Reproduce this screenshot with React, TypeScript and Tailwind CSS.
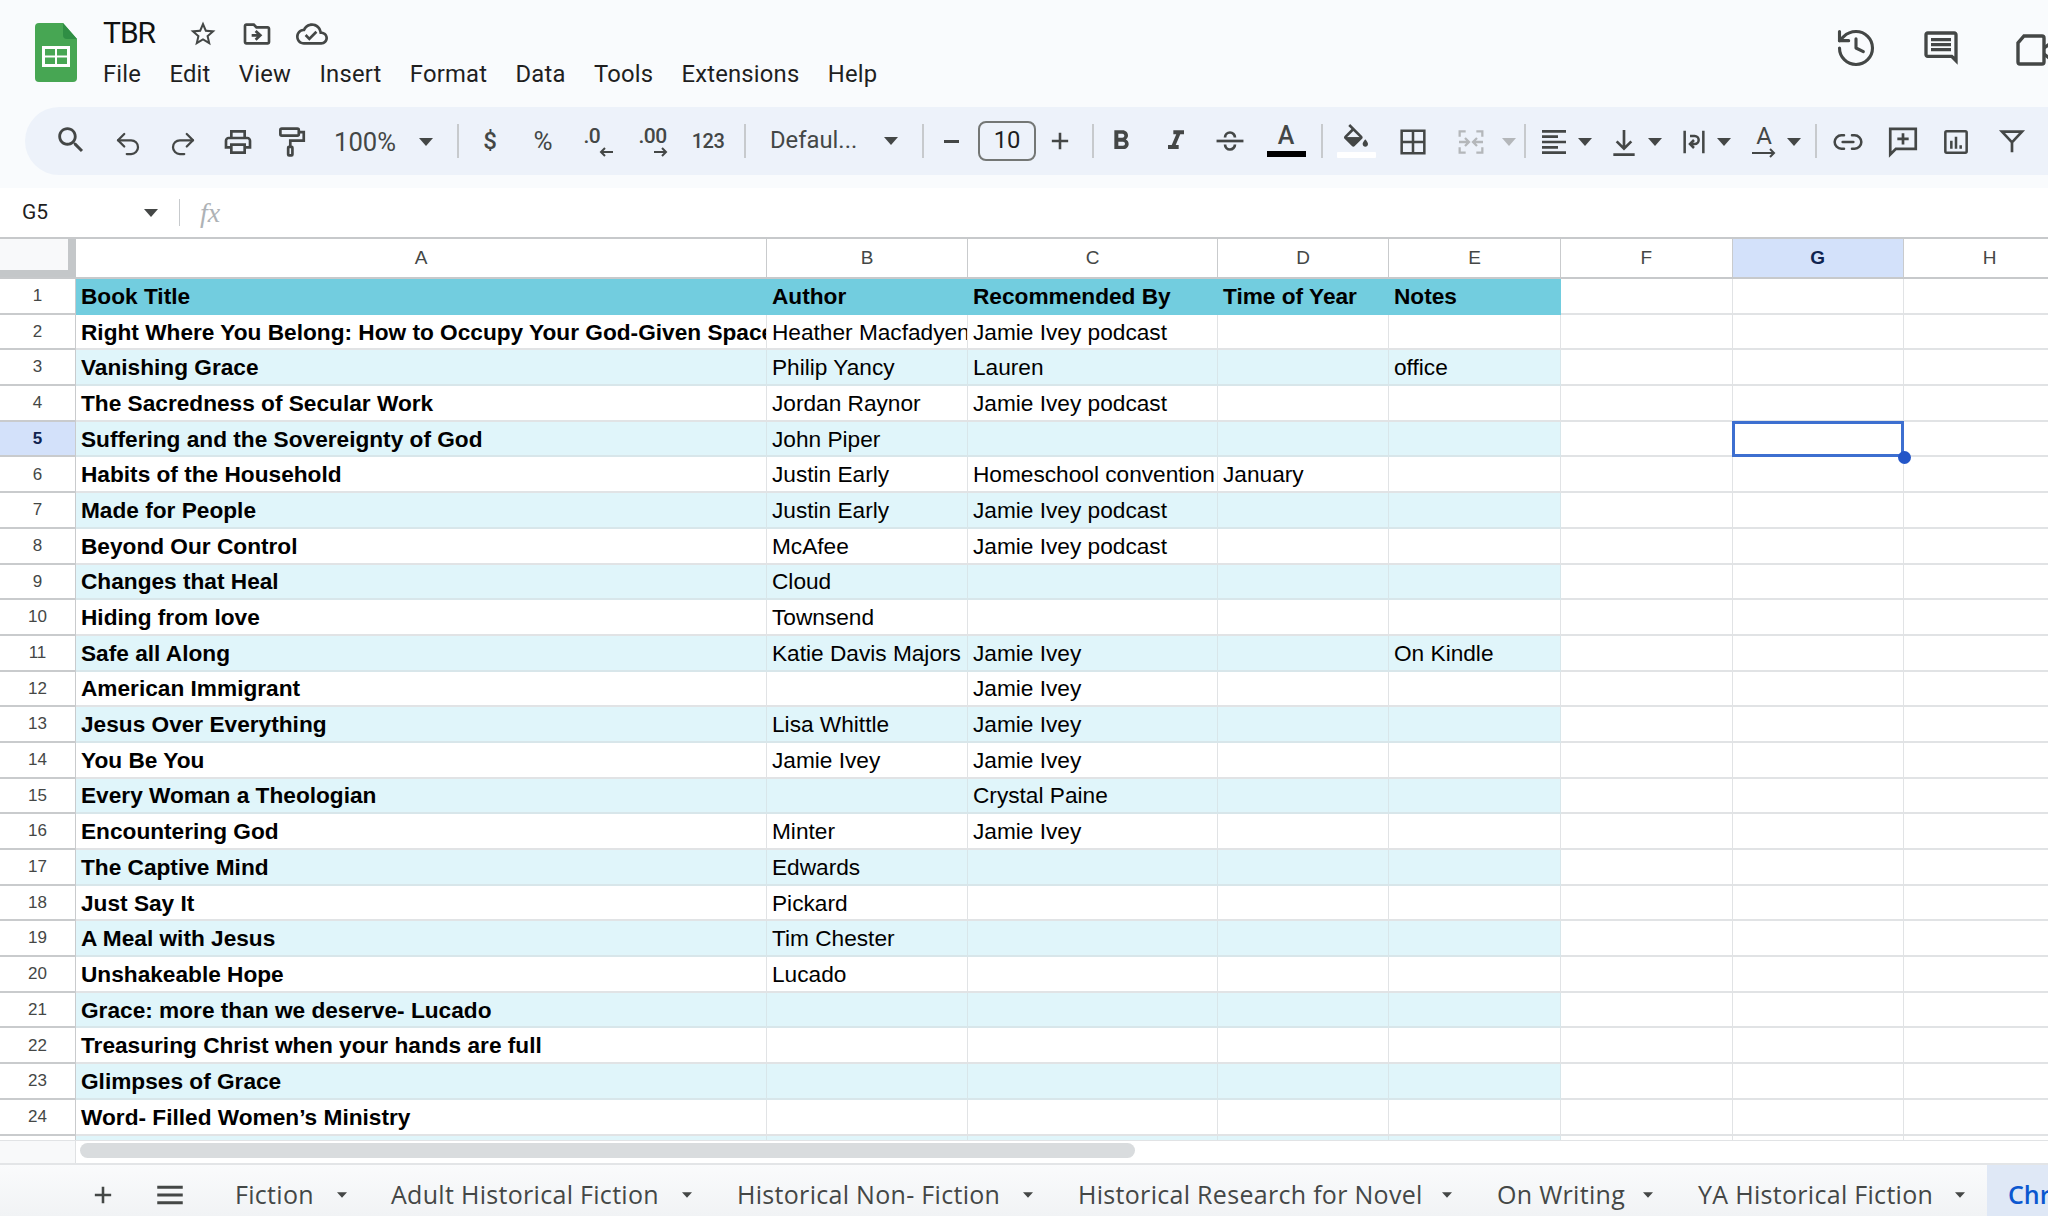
import React from "react";
import { History, Link2, Undo2, Redo2 } from "lucide-react";

const INK = "text-[#444746]";

function Ico({ d, fill, sw = 1.7, size = "w-[32px] h-[32px]", children }: { d?: string; fill?: boolean; sw?: number; size?: string; children?: React.ReactNode }) {
  return (
    <svg viewBox="0 0 24 24" className={size + " shrink-0"} fill={fill ? "currentColor" : "none"} stroke={fill ? "none" : "currentColor"} strokeWidth={sw}>
      {d ? <path d={d} /> : null}
      {children}
    </svg>
  );
}

function Caret({ small, grey }: { small?: boolean; grey?: boolean }) {
  return (
    <svg viewBox="0 0 14 8" className={(small ? "w-[10px] h-[6px] " : "w-[14px] h-[8px] ") + "shrink-0 " + (grey ? "text-[#b4b7ba]" : "")} fill="currentColor">
      <path d="M0 0h14L7 8z" />
    </svg>
  );
}

function Sep() {
  return <div className="w-[2px] h-[34px] shrink-0 bg-[#c7cacd]" />;
}

function Btn({ className, children }: { className: string; children: React.ReactNode }) {
  return <div className={"h-full shrink-0 flex items-center justify-center " + className}>{children}</div>;
}

const R = "font-['Roboto',sans-serif]";

function Logo() {
  return (
    <svg viewBox="0 0 42 59" className="w-[42px] h-[59px] shrink-0">
      <path d="M4 0H28L42 16V55a4 4 0 0 1-4 4H4a4 4 0 0 1-4-4V4a4 4 0 0 1 4-4z" fill="#47a653" />
      <path d="M28 0L42 16H32a4 4 0 0 1-4-4z" fill="#2f8e44" />
      <rect x="7" y="23" width="28" height="21" fill="#fff" />
      <rect x="10" y="26" width="10" height="6.5" fill="#47a653" />
      <rect x="22" y="26" width="10" height="6.5" fill="#47a653" />
      <rect x="10" y="34.5" width="10" height="6.5" fill="#47a653" />
      <rect x="22" y="34.5" width="10" height="6.5" fill="#47a653" />
    </svg>
  );
}

function Header() {
  const menus = ["File", "Edit", "View", "Insert", "Format", "Data", "Tools", "Extensions", "Help"];
  return (
    <div className="h-[107px] shrink-0 bg-[#f9fbfd] flex overflow-hidden">
      <div className="ml-[35px] mt-[23px]">
        <Logo />
      </div>
      <div className="ml-[26px] flex flex-col">
        <div className="flex items-center h-[36px] mt-[15px]">
          <span className={R + " text-[30px] leading-none text-[#111] tracking-[-1px]"}>TBR</span>
          <div className={"ml-[33px] mt-[1px] flex items-center " + INK}>
            <Ico fill size="w-[30px] h-[30px]" d="M22 9.24l-7.19-.62L12 2 9.19 8.63 2 9.24l5.46 4.73L5.82 21 12 17.27 18.18 21l-1.63-7.03L22 9.24zM12 15.4l-3.76 2.27 1-4.28-3.32-2.88 4.38-.38L12 6.1l1.71 4.04 4.38.38-3.32 2.88 1 4.28L12 15.4z" />
            <div className="ml-[23px]">
              <Ico fill d="M20 6h-8l-2-2H4c-1.1 0-2 .9-2 2v12c0 1.1.9 2 2 2h16c1.1 0 2-.9 2-2V8c0-1.1-.9-2-2-2zm0 12H4V6h5.17l2 2H20v10zm-8.16-6H8v2h3.84l-1.59 1.59L11.66 17 16 12.99 11.66 9l-1.41 1.41L11.84 12z" />
            </div>
            <div className="ml-[23px]">
              <Ico fill d="M19.35 10.04C18.67 6.59 15.64 4 12 4 9.11 4 6.6 5.64 5.35 8.04 2.34 8.36 0 10.91 0 14c0 3.31 2.69 6 6 6h13c2.76 0 5-2.24 5-5 0-2.64-2.05-4.78-4.65-4.96zM19 18H6c-2.21 0-4-1.79-4-4 0-2.05 1.53-3.76 3.56-3.97l1.07-.11.5-.95C8.08 7.14 9.94 6 12 6c2.62 0 4.88 1.86 5.39 4.43l.3 1.5 1.53.11c1.56.1 2.78 1.41 2.78 2.96 0 1.65-1.35 3-3 3zm-9-3.82l-2.09-2.09L6.5 13.5 10 17l6.01-6.01-1.41-1.41z" />
            </div>
          </div>
        </div>
        <div className={R + " flex items-center gap-[28.3px] mt-[8px] text-[23.8px] tracking-[0.2px] leading-[30px] text-[#1f1f1f]"}>
          {menus.map((m) => (
            <span key={m}>{m}</span>
          ))}
        </div>
      </div>
      <div className={"ml-auto mr-[-12px] mt-[26px] flex items-start shrink-0 " + INK}>
        <History className="w-[44px] h-[44px] shrink-0" strokeWidth={1.7} />
        <div className="ml-[43px] mt-[2px]">
          <Ico fill size="w-[40px] h-[40px]" d="M20 2H4c-1.1 0-2 .9-2 2v12c0 1.1.9 2 2 2h14l4 4V4c0-1.1-.9-2-2-2zm0 15.17L18.83 16H4V4h16v13.17zM6 12h12v2H6zm0-3h12v2H6zm0-3h12v2H6z" />
        </div>
        <div className="ml-[51px] mt-[5px]">
          <svg viewBox="0 0 48 40" className="w-[48px] h-[40px] shrink-0" fill="none" stroke="currentColor" strokeWidth="3.4">
            <path d="M12 5h18a2 2 0 0 1 2 2v24a2 2 0 0 1-2 2H8a2 2 0 0 1-2-2V12z" />
            <path d="M32 17l12-9v24l-12-9" />
          </svg>
        </div>
      </div>
    </div>
  );
}

function Toolbar() {
  return (
    <div className="h-[81px] shrink-0 bg-[#f9fbfd] pl-[25px]">
      <div className={"h-[68px] bg-[#edf2fa] rounded-l-[34px] pl-[19px] flex items-center " + INK}>
        <Btn className="w-[54px]">
          <Ico fill d="M15.5 14h-.79l-.28-.27C15.41 12.59 16 11.11 16 9.5 16 5.91 13.09 3 9.5 3S3 5.91 3 9.5 5.91 16 9.5 16c1.61 0 3.09-.59 4.23-1.57l.27.28v.79l5 4.99L20.49 19l-4.99-5zm-6 0C7.01 14 5 11.99 5 9.5S7.01 5 9.5 5 14 7.01 14 9.5 11.99 14 9.5 14z" size="w-[34px] h-[34px] mt-[-2px]" />
        </Btn>
        <Btn className="w-[60px] pt-[6px]">
          <Undo2 className="w-[30px] h-[30px]" strokeWidth={1.8} />
        </Btn>
        <Btn className="w-[50px] pt-[6px]">
          <Redo2 className="w-[30px] h-[30px]" strokeWidth={1.8} />
        </Btn>
        <Btn className="w-[60px] pt-[2px]">
          <Ico fill d="M19 8h-1V3H6v5H5c-1.66 0-3 1.34-3 3v6h4v4h12v-4h4v-6c0-1.66-1.34-3-3-3zM8 5h8v3H8V5zm8 12v2H8v-4h8v2zm2-2v-2H6v2H4v-4c0-.55.45-1 1-1h14c.55 0 1 .45 1 1v4h-2z" />
        </Btn>
        <Btn className="w-[46px] pt-[2px]">
          <Ico sw={1.9} size="w-[34px] h-[34px]">
            <rect x="4.5" y="2.5" width="13" height="5" rx="1" />
            <path d="M17.5 5H21v6H11.5v4" />
            <rect x="10" y="15.5" width="3" height="6" rx="0.6" />
          </Ico>
        </Btn>
        <div className={"w-[143px] h-full shrink-0 flex items-center justify-between pl-[20px] pr-[24px] " + R + " text-[25.6px] pt-[2px]"}>
          <span>100%</span>
          <Caret />
        </div>
        <Sep />
        <Btn className={"w-[62px] text-[24px] font-medium " + R}>$</Btn>
        <Btn className={"w-[44px] text-[26px] " + R}>%</Btn>
        <Btn className="w-[66px]">
          <div className="flex flex-col items-start mt-[1px]">
            <span className={R + " text-[21px] font-medium leading-[20px] tracking-[-0.5px]"}>.0</span>
            <svg viewBox="0 0 14 10" className="w-[14px] h-[10px] ml-[15px] mt-[1px]" fill="none" stroke="currentColor" strokeWidth="2">
              <path d="M14 5H2M6 1L2 5l4 4" />
            </svg>
          </div>
        </Btn>
        <Btn className="w-[44px]">
          <div className="flex flex-col items-start mt-[1px]">
            <span className={R + " text-[21px] font-medium leading-[20px] tracking-[-0.5px]"}>.00</span>
            <svg viewBox="0 0 14 10" className="w-[14px] h-[10px] ml-[15px] mt-[1px]" fill="none" stroke="currentColor" strokeWidth="2">
              <path d="M0 5h12M8 1l4 4-4 4" />
            </svg>
          </div>
        </Btn>
        <Btn className={"w-[66px] text-[20px] tracking-[-0.6px] font-medium " + R}>123</Btn>
        <div className="ml-[3px]">
          <Sep />
        </div>
        <div className={"w-[176px] h-full shrink-0 flex items-center justify-between pl-[24px] pr-[24px] text-[23.8px] " + R}>
          <span>Defaul...</span>
          <Caret />
        </div>
        <Sep />
        <Btn className="w-[54px]">
          <div className="w-[15px] h-[3px] bg-current" />
        </Btn>
        <div className={"w-[58px] h-[40px] shrink-0 flex items-center justify-center rounded-[8px] border-2 border-[#747775] text-[23.8px] text-[#1f1f1f] " + R}>10</div>
        <Btn className="w-[48px]">
          <Ico sw={2.2} size="w-[28px] h-[28px]" d="M12 5v14M5 12h14" />
        </Btn>
        <div className="ml-[8px]">
          <Sep />
        </div>
        <Btn className="w-[54px]">
          <Ico fill d="M15.6 10.79c.97-.67 1.65-1.77 1.65-2.79 0-2.26-1.75-4-4-4H7v14h7.04c2.09 0 3.71-1.7 3.71-3.79 0-1.52-.86-2.82-2.15-3.42zM10 6.5h3c.83 0 1.5.67 1.5 1.5s-.67 1.5-1.5 1.5h-3v-3zm3.5 9H10v-3h3.5c.83 0 1.5.67 1.5 1.5s-.67 1.5-1.5 1.5z" />
        </Btn>
        <Btn className="w-[56px]">
          <Ico fill d="M10 4v3h2.21l-3.42 8H6v3h8v-3h-2.21l3.42-8H18V4z" />
        </Btn>
        <Btn className="w-[52px]">
          <Ico sw={1.9} size="w-[34px] h-[34px]">
            <path d="M2.5 12h19" />
            <path d="M8.5 9.5a3.5 3.5 0 0 1 7 0" />
            <path d="M8.5 14.5a3.5 3.5 0 0 0 7 0" />
          </Ico>
        </Btn>
        <Btn className="w-[60px]">
          <div className="flex flex-col items-center">
            <span className={R + " text-[25px] font-medium leading-[22px] mt-[-1px]"}>A</span>
            <div className="w-[39px] h-[6px] mt-[4px] bg-black" />
          </div>
        </Btn>
        <div className="ml-[5px]">
          <Sep />
        </div>
        <Btn className="w-[66px]">
          <div className="flex flex-col items-center">
            <svg viewBox="0 0 24 21" className="w-[32px] h-[28px] shrink-0" fill="currentColor">
              <path d="M16.56 8.94L7.62 0 6.21 1.41l2.38 2.38-5.15 5.15c-.59.59-.59 1.54 0 2.12l5.5 5.5c.29.29.68.44 1.06.44s.77-.15 1.06-.44l5.5-5.5c.59-.58.59-1.53 0-2.12zM5.21 10L10 5.21 14.79 10H5.21zM19 11.5s-2 2.17-2 3.5c0 1.1.9 2 2 2s2-.9 2-2c0-1.33-2-3.5-2-3.5z" />
              <path d="M5 10h10l-5 5z" />
            </svg>
            <div className="w-[39px] h-[6px] bg-white rounded-[1px]" />
          </div>
        </Btn>
        <Btn className="w-[48px] pt-[2px]">
          <Ico sw={1.9} d="M3.5 3.5h17v17h-17zM12 3.5v17M3.5 12h17" />
        </Btn>
        <div className="w-[87px] h-full shrink-0 flex items-center pl-[18px] pt-[2px] text-[#b4b7ba]">
          <Ico sw={1.7}>
            <path d="M3.5 8V4H8M3.5 16v4H8M20.5 8V4H16M20.5 16v4H16" />
            <path d="M3 12h7M7.5 9l3 3-3 3M21 12h-7M16.5 9l-3 3 3 3" />
          </Ico>
          <div className="ml-[15px]">
            <Caret grey />
          </div>
        </div>
        <Sep />
        <div className="w-[75px] h-full shrink-0 flex items-center pl-[12px] pt-[2px]">
          <Ico fill d="M15 15H3v2h12v-2zm0-8H3v2h12V7zM3 13h18v-2H3v2zm0 8h18v-2H3v2zM3 3v2h18V3H3z" />
          <div className="ml-[8px]">
            <Caret />
          </div>
        </div>
        <div className="w-[75px] h-full shrink-0 flex items-center pl-[7px] pt-[2px]">
          <Ico sw={2} d="M12 3v14M6.5 11.5L12 17l5.5-5.5M4 21.5h16" />
          <div className="ml-[8px]">
            <Caret />
          </div>
        </div>
        <div className="w-[72px] h-full shrink-0 flex items-center pl-[2px] pt-[2px]">
          <Ico sw={1.9}>
            <path d="M5 3.5v17M19 3.5v17" />
            <path d="M9 7.5h3.5a3 3 0 0 1 0 6H9M12 10.5l-3 3 3 3" />
          </Ico>
          <div className="ml-[7px]">
            <Caret />
          </div>
        </div>
        <div className="w-[66px] h-full shrink-0 flex items-center pt-[2px]">
          <div className="w-[32px] flex flex-col items-center">
            <span className={R + " text-[24px] leading-[21px]"}>A</span>
            <svg viewBox="0 0 24 10" className="w-[24px] h-[10px] mt-[1px]" fill="none" stroke="currentColor" strokeWidth="2">
              <path d="M0 5h22M18 1l4 4-4 4" />
            </svg>
          </div>
          <div className="ml-[7px]">
            <Caret />
          </div>
        </div>
        <div className="ml-[1px]">
          <Sep />
        </div>
        <Btn className="w-[62px] pt-[2px]">
          <Link2 className="w-[32px] h-[32px]" strokeWidth={1.9} />
        </Btn>
        <Btn className="w-[48px]">
          <Ico sw={1.9} d="M3 3.5h18v14H7L3 21.5zM12 6.5v8M8 10.5h8" size="w-[34px] h-[34px]" />
        </Btn>
        <Btn className="w-[58px] pt-[2px]">
          <Ico sw={1.9} d="M5 4h14a1 1 0 0 1 1 1v14a1 1 0 0 1-1 1H5a1 1 0 0 1-1-1V5a1 1 0 0 1 1-1zM8.5 11v6M12 8v9M15.5 14.5V17" />
        </Btn>
        <Btn className="w-[54px]">
          <Ico sw={2} d="M4.5 5h15L12 13zM12 13v7.5" />
        </Btn>
      </div>
    </div>
  );
}

function FormulaBar() {
  return (
    <div className="h-[49px] shrink-0 bg-white flex items-center relative">
      <div className={"w-[179px] shrink-0 flex items-center pl-[22px] pr-[21px] justify-between text-[21px] text-[#1f1f1f] " + R}>
        <span>G5</span>
        <span className={INK}>
          <Caret />
        </span>
      </div>
      <div className="w-[1px] h-[27px] bg-[#c7cacd]" />
      <span className="ml-[20px] font-['Liberation_Serif',serif] italic text-[28px] text-[#aeb2b6] leading-none">fx</span>
    </div>
  );
}

type Row = [string, string, string, string, string];
const rows: Row[] = [
  ["Book Title", "Author", "Recommended By", "Time of Year", "Notes"],
  ["Right Where You Belong: How to Occupy Your God-Given Space", "Heather Macfadyen", "Jamie Ivey podcast", "", ""],
  ["Vanishing Grace", "Philip Yancy", "Lauren", "", "office"],
  ["The Sacredness of Secular Work", "Jordan Raynor", "Jamie Ivey podcast", "", ""],
  ["Suffering and the Sovereignty of God", "John Piper", "", "", ""],
  ["Habits of the Household", "Justin Early", "Homeschool convention", "January", ""],
  ["Made for People", "Justin Early", "Jamie Ivey podcast", "", ""],
  ["Beyond Our Control", "McAfee", "Jamie Ivey podcast", "", ""],
  ["Changes that Heal", "Cloud", "", "", ""],
  ["Hiding from love", "Townsend", "", "", ""],
  ["Safe all Along", "Katie Davis Majors", "Jamie Ivey", "", "On Kindle"],
  ["American Immigrant", "", "Jamie Ivey", "", ""],
  ["Jesus Over Everything", "Lisa Whittle", "Jamie Ivey", "", ""],
  ["You Be You", "Jamie Ivey", "Jamie Ivey", "", ""],
  ["Every Woman a Theologian", "", "Crystal Paine", "", ""],
  ["Encountering God", "Minter", "Jamie Ivey", "", ""],
  ["The Captive Mind", "Edwards", "", "", ""],
  ["Just Say It", "Pickard", "", "", ""],
  ["A Meal with Jesus", "Tim Chester", "", "", ""],
  ["Unshakeable Hope", "Lucado", "", "", ""],
  ["Grace: more than we deserve- Lucado", "", "", "", ""],
  ["Treasuring Christ when your hands are full", "", "", "", ""],
  ["Glimpses of Grace", "", "", "", ""],
  ["Word- Filled Women\u2019s Ministry", "", "", "", ""],
];

const colW = ["w-[691px]", "w-[201px]", "w-[250px]", "w-[171px]", "w-[172px]", "w-[171.5px]", "w-[171.5px]", "w-[172px]"];
const letters = ["A", "B", "C", "D", "E", "F", "G", "H"];

function ColHeader() {
  return (
    <div className="h-[42px] shrink-0 flex border-t-2 border-b-2 border-[#c7c9cb] font-['Liberation_Sans',sans-serif] text-[19px] text-[#444746]">
      <div className="w-[76px] shrink-0 bg-[#f8f9fa] border-r-[8px] border-b-[7px] border-[#c4c7c9]" />
      {letters.map((l, i) => (
        <div key={l} className={colW[i] + " shrink-0 flex items-center justify-center border-r border-[#c9cbcd] " + (l === "G" ? "bg-[#d3e1fa] font-bold text-[#0f2350]" : "bg-white")}>
          {l}
        </div>
      ))}
    </div>
  );
}

function DataRow({ row, index }: { row: Row; index: number }) {
  const head = index === 0;
  const alt = index % 2 === 0 && !head;
  const selected = index === 4;
  const bg = head ? "bg-[#72cddf]" : alt ? "bg-[#e0f5fa]" : "bg-white";
  return (
    <div className="h-[35.7px] shrink-0 flex font-['Liberation_Sans',sans-serif] text-[22.67px] text-black">
      <div className={"w-[76px] shrink-0 flex items-center justify-center border-r border-b-2 border-[#c9cbcd] text-[17px] " + (selected ? "bg-[#d3e1fa] font-bold text-[#0f2350]" : "bg-white text-[#444746]")}>
        {index + 1}
      </div>
      {row.map((cell, c) => (
        <div key={c} className={colW[c] + " shrink-0 flex items-center pl-[5px] overflow-hidden whitespace-nowrap border-r border-b-2 " + bg + " " + (head ? "border-[#72cddf] font-bold" : alt ? "border-[#d8e6ea]" : "border-[#e1e3e5]") + " " + (c === 0 ? "font-bold" : "")}>
          {cell}
        </div>
      ))}
      {[5, 6, 7].map((c) => (
        <div key={c} className={colW[c] + " shrink-0 relative bg-white border-r border-b-2 border-[#e1e3e5]"}>
          {selected && c === 6 ? (
            <>
              <div className="absolute left-[-1px] right-[-1px] top-[-1px] bottom-[-2px] border-[3px] border-[#3d6fd0]" />
              <div className="absolute right-[-8px] bottom-[-9px] w-[13px] h-[13px] rounded-full bg-[#2456c8] z-10" />
            </>
          ) : null}
        </div>
      ))}
    </div>
  );
}

function Grid() {
  return (
    <div className="flex-1 flex flex-col overflow-hidden bg-white">
      <ColHeader />
      {rows.map((r, i) => (
        <DataRow key={i} row={r} index={i} />
      ))}
      <div className="h-[4px] shrink-0 flex overflow-hidden">
        <div className="w-[76px] shrink-0 bg-white border-r border-[#c9cbcd]" />
        {colW.map((w, c) => (
          <div key={c} className={w + " shrink-0 border-r " + (c < 5 ? "bg-[#e0f5fa] border-[#d8e6ea]" : "bg-white border-[#e1e3e5]")} />
        ))}
      </div>
      <div className="h-[23px] shrink-0 flex border-t border-[#e1e3e5]">
        <div className="w-[76px] shrink-0 bg-[#f8f9fa] border-r border-[#dfe1e3]" />
        <div className="ml-[4px] mt-[2px] w-[1055px] h-[15px] rounded-full bg-[#d9dcde]" />
      </div>
    </div>
  );
}

function Tab({ label, className }: { label: string; className: string }) {
  return (
    <div className={"shrink-0 flex items-center text-[25px] tracking-[0.3px] text-[#444746] justify-between pt-[9px] font-['Open_Sans',sans-serif] " + className}>
      <span>{label}</span>
      <Caret small />
    </div>
  );
}

function TabBar() {
  return (
    <div className="h-[53px] shrink-0 flex items-center border-t-2 border-[#e3e5e7] bg-gradient-to-b from-[#fafbfc] to-[#f1f3f5] overflow-hidden">
      <div className={"w-[235px] shrink-0 flex items-center pl-[89px] pt-[9px] " + INK}>
        <Ico sw={2.2} size="w-[28px] h-[28px]" d="M12 5v14M5 12h14" />
        <div className="ml-[36px]">
          <Ico sw={2.2} size="w-[34px] h-[34px]" d="M3 6.5h18M3 12h18M3 17.5h18" />
        </div>
      </div>
      <Tab label="Fiction" className="w-[112px] mr-[44px]" />
      <Tab label="Adult Historical Fiction" className="w-[301px] mr-[45px]" />
      <Tab label="Historical Non- Fiction" className="w-[296px] mr-[45px]" />
      <Tab label="Historical Research for Novel" className="w-[374px] mr-[45px]" />
      <Tab label="On Writing" className="w-[156px] mr-[45px]" />
      <Tab label="YA Historical Fiction" className="w-[267px] mr-[22px]" />
      <div className="w-[62px] h-full shrink-0 bg-[#dfe8f6] pl-[21px] pt-[9px] flex items-center overflow-hidden whitespace-nowrap font-['Open_Sans',sans-serif] font-semibold text-[25px] text-[#0b57d0]">Chr</div>
    </div>
  );
}

export default function App() {
  return (
    <div className="w-[2048px] h-[1216px] overflow-hidden flex flex-col bg-white">
      <Header />
      <Toolbar />
      <FormulaBar />
      <Grid />
      <TabBar />
    </div>
  );
}
